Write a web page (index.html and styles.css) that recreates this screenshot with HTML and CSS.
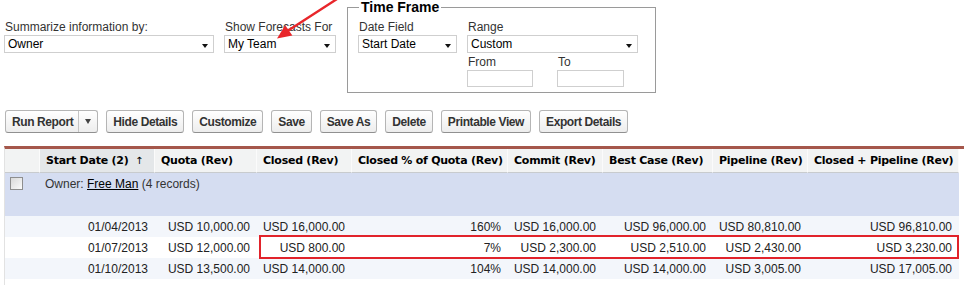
FILE: index.html
```html
<!DOCTYPE html>
<html>
<head>
<meta charset="utf-8">
<link rel="stylesheet" href="styles.css">
</head>
<body>
<div class="page">
  <div class="top">
    <div class="field f-summ">
      <div class="lbl">Summarize information by:</div>
      <div class="sel"><span>Owner</span><i class="caret"></i></div>
    </div>
    <div class="field f-show">
      <div class="lbl">Show Forecasts For</div>
      <div class="sel"><span>My Team</span><i class="caret"></i></div>
    </div>
    <div class="timeframe">
      <div class="legend">Time Frame</div>
      <div class="tf-body">
        <div class="field f-date">
          <div class="lbl">Date Field</div>
          <div class="sel"><span>Start Date</span><i class="caret"></i></div>
        </div>
        <div class="field f-range">
          <div class="lbl">Range</div>
          <div class="sel"><span>Custom</span><i class="caret"></i></div>
          <div class="fromto">
            <div class="field f-from">
              <div class="lbl">From</div>
              <div class="inp"></div>
            </div>
            <div class="field f-to">
              <div class="lbl">To</div>
              <div class="inp"></div>
            </div>
          </div>
        </div>
      </div>
    </div>
  </div>

  <div class="buttons">
    <div class="btn split"><span class="btn-text">Run Report</span><span class="dd"><i class="tri"></i></span></div>
    <div class="btn">Hide Details</div>
    <div class="btn">Customize</div>
    <div class="btn">Save</div>
    <div class="btn">Save As</div>
    <div class="btn">Delete</div>
    <div class="btn">Printable View</div>
    <div class="btn">Export Details</div>
  </div>

  <div class="report">
    <table class="grid">
      <colgroup>
        <col class="c-chk"><col class="c-date"><col class="c-quota"><col class="c-closed"><col class="c-pct"><col class="c-commit"><col class="c-best"><col class="c-pipe"><col class="c-cp">
      </colgroup>
      <thead>
        <tr>
          <th class="h-first"></th>
          <th class="sorted">Start Date (2) <span class="sort">&#8593;</span></th>
          <th>Quota (Rev)</th>
          <th>Closed (Rev)</th>
          <th>Closed % of Quota (Rev)</th>
          <th>Commit (Rev)</th>
          <th>Best Case (Rev)</th>
          <th>Pipeline (Rev)</th>
          <th>Closed + Pipeline (Rev)</th>
        </tr>
      </thead>
      <tbody>
        <tr class="group">
          <td class="g-chk"><span class="chk"></span></td>
          <td class="g-text" colspan="8">Owner: <a class="owner">Free Man</a> (4 records)</td>
        </tr>
        <tr class="row alt">
          <td></td><td>01/04/2013</td><td>USD 10,000.00</td><td>USD 16,000.00</td><td>160%</td><td>USD 16,000.00</td><td>USD 96,000.00</td><td>USD 80,810.00</td><td>USD 96,810.00</td>
        </tr>
        <tr class="row">
          <td></td><td>01/07/2013</td><td>USD 12,000.00</td><td>USD 800.00</td><td>7%</td><td>USD 2,300.00</td><td>USD 2,510.00</td><td>USD 2,430.00</td><td>USD 3,230.00</td>
        </tr>
        <tr class="row alt">
          <td></td><td>01/10/2013</td><td>USD 13,500.00</td><td>USD 14,000.00</td><td>104%</td><td>USD 14,000.00</td><td>USD 14,000.00</td><td>USD 3,005.00</td><td>USD 17,005.00</td>
        </tr>
      </tbody>
    </table>
    <div class="tail"></div>
  </div>

  <div class="highlight"></div>
  <svg class="arrow" width="964" height="285" viewBox="0 0 964 285">
    <line x1="337" y1="-1" x2="289" y2="30" stroke="#e8262b" stroke-width="2.4" stroke-linecap="round"/>
    <polygon points="277,38.5 285.2,25.2 292.4,35.6" fill="#e8262b"/>
  </svg>
</div>
</body>
</html>
```

FILE: styles.css
```css
html, body {
  margin: 0;
  padding: 0;
  background: #ffffff;
}
body {
  font-family: "Liberation Sans", Arial, sans-serif;
  font-size: 12px;
  color: #333;
}
.page {
  position: relative;
  width: 964px;
  height: 285px;
  overflow: hidden;
}

/* ---------- filters ---------- */
.top {
  display: flex;
  align-items: flex-start;
  height: 110px;
  padding-left: 4px;
  box-sizing: border-box;
}
.field {
  display: flex;
  flex-direction: column;
}
.lbl {
  font-size: 12px;
  line-height: 15px;
  height: 15px;
  color: #333;
  white-space: nowrap;
  padding-left: 1px;
}
.sel {
  height: 18px;
  box-sizing: border-box;
  border: 1px solid #cfcfcf;
  background: #fff;
  display: flex;
  align-items: center;
  justify-content: space-between;
  padding: 0 5px 0 3px;
  color: #000;
  font-size: 12px;
}
.caret {
  width: 0;
  height: 0;
  border-left: 3.5px solid transparent;
  border-right: 3.5px solid transparent;
  border-top: 4px solid #111;
  margin-top: 3px;
}
.f-summ { margin-top: 20px; width: 210px; }
.f-show { margin-top: 20px; margin-left: 10px; width: 112px; }

.timeframe {
  position: relative;
  margin-top: 7px;
  margin-left: 11px;
  width: 309px;
  height: 86px;
  box-sizing: border-box;
  border: 1px solid #9a9a9a;
}
.legend {
  position: absolute;
  top: -9px;
  left: 11px;
  padding: 0 2px;
  background: #fff;
  font-weight: bold;
  font-size: 14px;
  line-height: 16px;
  color: #000;
}
.tf-body {
  display: flex;
  padding: 12px 0 0 10px;
}
.f-date { width: 99px; }
.f-range { width: 171px; margin-left: 10px; }
.fromto {
  display: flex;
  margin-top: 2px;
}
.f-from { width: 66px; }
.f-to { width: 67px; margin-left: 24px; }
.inp {
  height: 17px;
  box-sizing: border-box;
  border: 1px solid #cfcfcf;
  background: #fff;
}

/* ---------- buttons ---------- */
.buttons {
  display: flex;
  gap: 8px;
  padding-left: 5px;
  height: 23px;
}
.btn {
  height: 23px;
  box-sizing: border-box;
  display: flex;
  align-items: center;
  padding: 0 6px;
  border: 1px solid #b5b5b5;
  border-bottom-color: #909090;
  border-radius: 3px;
  background: linear-gradient(#ffffff, #ededed);
  font-family: "Liberation Sans", Arial, sans-serif;
  font-weight: bold;
  font-size: 12px;
  letter-spacing: -0.4px;
  color: #333;
  white-space: nowrap;
}
.btn.split {
  padding-right: 0;
}
.dd {
  height: 100%;
  display: flex;
  align-items: center;
  margin-left: 5px;
  padding: 0 6px;
  border-left: 1px solid #c4c4c4;
}
.tri {
  width: 0;
  height: 0;
  border-left: 3.5px solid transparent;
  border-right: 3.5px solid transparent;
  border-top: 5px solid #444;
}

/* ---------- report table ---------- */
.report {
  margin-top: 13px;
  margin-left: 4px;
  width: 960px;
  border-top: 3px solid #a5574b;
  border-left: 1px solid #e2e2e2;
  box-sizing: border-box;
}
.grid {
  border-collapse: separate;
  border-spacing: 0;
  table-layout: fixed;
  width: 954px;
}
.c-chk { width: 35px; }
.c-date { width: 115px; }
.c-quota { width: 102px; }
.c-closed { width: 95px; }
.c-pct { width: 156px; }
.c-commit { width: 95px; }
.c-best { width: 110px; }
.c-pipe { width: 95px; }
.c-cp { width: 151px; }

.grid th {
  height: 24px;
  box-sizing: border-box;
  padding: 0 0 0 6px;
  text-align: left;
  font-family: "DejaVu Sans", Verdana, sans-serif;
  font-weight: bold;
  font-size: 11px;
  letter-spacing: -0.25px;
  color: #000;
  white-space: nowrap;
  background: #f2f3f3;
  border-bottom: 1px solid #c8cbce;
  border-right: 1px solid #fbfbfb;
}
.grid th.sorted {
  background: #e4e7e9;
}
.sort {
  font-family: "DejaVu Sans", sans-serif;
  font-weight: normal;
  font-size: 10px;
  margin-left: 3px;
}
.group td {
  background: #d5ddf1;
  height: 43px;
  box-sizing: border-box;
  vertical-align: top;
}
.g-chk {
  padding: 4px 0 0 5px;
}
.chk {
  display: block;
  width: 13px;
  height: 13px;
  box-sizing: border-box;
  border: 1px solid #8e8e8e;
  background: linear-gradient(135deg, #d9d9d9, #fbfbfb);
}
.g-text {
  padding: 4px 0 0 5px;
  line-height: 15px;
  font-size: 12px;
  color: #333;
  white-space: nowrap;
}
.owner {
  color: #000;
  text-decoration: underline;
}
.row td {
  height: 21px;
  box-sizing: border-box;
  padding: 0 7px 0 0;
  text-align: right;
  vertical-align: middle;
  font-size: 12px;
  color: #222;
  white-space: nowrap;
  background: #ffffff;
}
.row.alt td {
  background: #f3f6fb;
}
.tail {
  height: 12px;
}

/* ---------- annotations ---------- */
.highlight {
  position: absolute;
  left: 259px;
  top: 235px;
  width: 700px;
  height: 24px;
  box-sizing: border-box;
  border: 2px solid #e1232b;
}
.arrow {
  position: absolute;
  left: 0;
  top: 0;
  pointer-events: none;
}
```
